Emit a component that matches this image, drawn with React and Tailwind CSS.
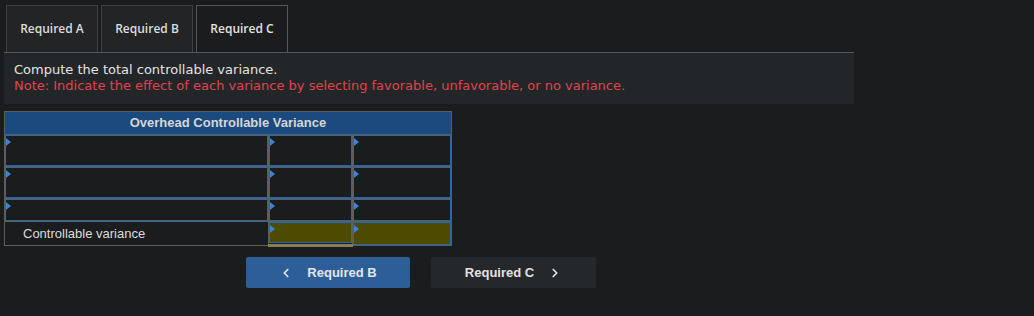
import { ChevronLeft, ChevronRight } from "lucide-react";

const tabs = ["Required A", "Required B", "Required C"];

function InputCell({ h, olive = false, className = "" }) {
  return (
    <td className={`border border-[#5e5e5a] p-0 align-top ${className}`}>
      <div
        className={`relative w-full border border-[#2f66a8] ${h} ${
          olive ? "bg-[#4d4b00]" : "bg-[#1b1c1e]"
        }`}
      >
        {/* little blue marker in the corner */}
        <span className="absolute left-0 top-[2px] h-0 w-0 border-y-[4px] border-l-[5px] border-y-transparent border-l-[#3b82d6]" />
      </div>
    </td>
  );
}

export default function App() {
  return (
    <div className="min-h-[316px] w-[1034px] bg-[#1b1c1e] pl-[4px] pt-[5px] font-['DejaVu_Sans',sans-serif]">
      {/* Tabs */}
      <div className="ml-[2px] flex gap-[3px]">
        {tabs.map((t, i) => (
          <div
            key={t}
            className={`flex h-[47px] w-[92px] items-center justify-center border border-b-0 font-['Open_Sans',sans-serif] text-[12px] font-semibold ${
              i === 2
                ? "border-[#54575a] bg-[#1b1c1e] text-[#e2e2e2]"
                : "border-[#3f4245] bg-[#222426] text-[#dcdcdc]"
            }`}
          >
            {t}
          </div>
        ))}
      </div>

      {/* Instructions */}
      <div className="w-[850px] border-t border-[#55585b] bg-[#232628] px-[10px] pb-[10px] pt-[9px] text-[13px] leading-[16px]">
        <p className="text-[#e4e4e4]">Compute the total controllable variance.</p>
        <p className="text-[#e0434b]">
          Note: Indicate the effect of each variance by selecting favorable, unfavorable, or no variance.
        </p>
      </div>

      {/* Table */}
      <table className="mt-[7px] w-[448px] border-collapse border border-[#5e5e5a] font-['Liberation_Sans',Arial,sans-serif] text-[13px]">
        <thead>
          <tr>
            <th
              colSpan={3}
              className="h-[23px] border border-[#5e5e5a] bg-[#1b4a7e] text-center font-bold text-[#d6d6d6]"
            >
              Overhead Controllable Variance
            </th>
          </tr>
        </thead>
        <tbody>
          <tr>
            <InputCell h="h-[31px]" className="w-[264px]" />
            <InputCell h="h-[31px]" className="w-[84px]" />
            <InputCell h="h-[31px]" />
          </tr>
          <tr>
            <InputCell h="h-[31px]" />
            <InputCell h="h-[31px]" />
            <InputCell h="h-[31px]" />
          </tr>
          <tr>
            <InputCell h="h-[22px]" />
            <InputCell h="h-[22px]" />
            <InputCell h="h-[22px]" />
          </tr>
          <tr>
            <td className="border border-[#5e5e5a] pl-[18px] text-[#dcdcdc]">Controllable variance</td>
            <InputCell h="h-[21px]" olive className="border-b-[3px] border-b-[#8a7d5a]" />
            <InputCell h="h-[23px]" olive />
          </tr>
        </tbody>
      </table>

      {/* Nav buttons */}
      <div className="mt-[10px] flex gap-[21px] pl-[242px] font-['Liberation_Sans',Arial,sans-serif] text-[13px] font-bold">
        <button className="flex h-[31px] w-[164px] items-center justify-center gap-[14px] rounded-[2px] bg-[#2d5e98] text-[#e2e6ec]">
          <ChevronLeft size={14} strokeWidth={3} />
          Required B
        </button>
        <button className="flex h-[31px] w-[165px] items-center justify-center gap-[14px] rounded-[2px] bg-[#25282b] text-[#e2e2e2]">
          Required C
          <ChevronRight size={14} strokeWidth={3} />
        </button>
      </div>
    </div>
  );
}
